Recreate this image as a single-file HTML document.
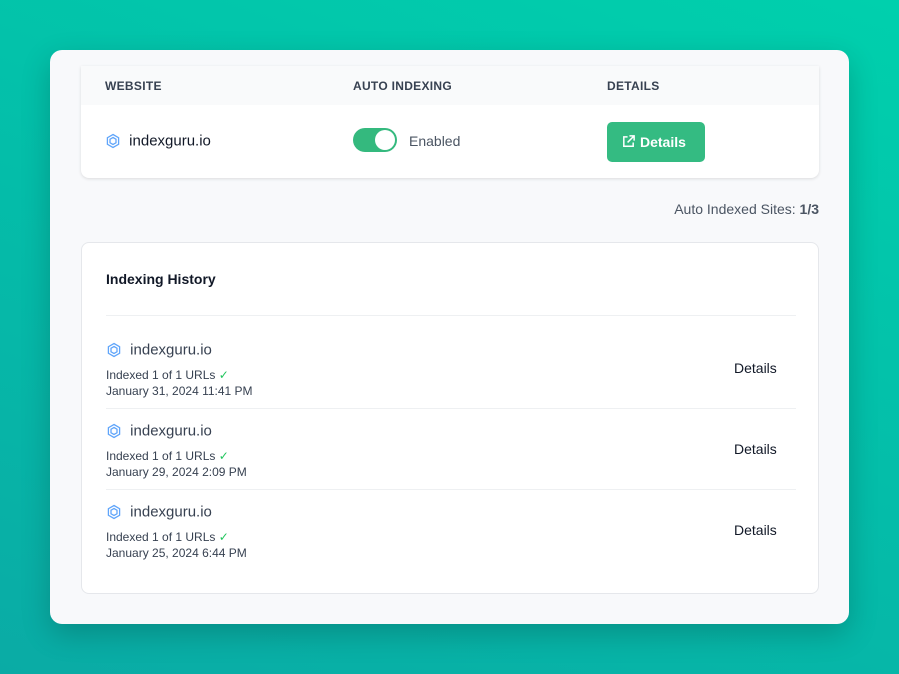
<!DOCTYPE html>
<html><head><style>
*{margin:0;padding:0;box-sizing:border-box}
body{width:899px;height:674px;overflow:hidden;background:linear-gradient(200deg,#00d0ad 0%,#04bda9 50%,#0aaba5 100%);font-family:"Liberation Sans",sans-serif;position:relative}
.panel{position:absolute;left:50px;top:50px;width:799px;height:574px;background:#f8f9fb;border-radius:12px;box-shadow:0 10px 30px rgba(0,0,0,.2)}
.tbl{position:absolute;left:31px;top:16px;width:738px;height:112px;background:#fff;border-radius:0 0 8px 8px;box-shadow:0 1px 3px rgba(0,0,0,.12)}
.thead{height:39px;background:#f9fafb;position:relative}
.th{position:absolute;top:13px;font-size:12px;font-weight:bold;color:#374151;letter-spacing:.3px}
.ico{display:inline-block;vertical-align:middle;margin-right:4px}
.site{position:absolute;font-size:15px;color:#111827}
.toggle{position:absolute;left:272px;top:62px;width:44px;height:24px;border-radius:12px;background:#34b97e}
.toggle:after{content:"";position:absolute;right:2px;top:2px;width:20px;height:20px;border-radius:50%;background:#fff}
.btn{position:absolute;left:526px;top:56px;width:98px;height:40px;background:#34bb82;border-radius:5px;color:#fff;font-weight:bold;font-size:14px;padding:12px 0 0 14px}
.hist{position:absolute;left:31px;top:192px;width:738px;height:352px;background:#fff;border:1px solid #e5e7eb;border-radius:8px}
.item{position:absolute;left:24px;width:690px;height:81px;border-bottom:1px solid #eef0f2}
.item .n{position:absolute;left:0;top:13px;font-size:15px;color:#374151}
.item .a{position:absolute;left:0;top:40px;font-size:12px;color:#374151}
.item .b{position:absolute;left:0;top:56px;font-size:12px;color:#374151}
.item .d{position:absolute;left:628px;top:32px;font-size:14px;color:#111827}
</style></head><body>
<div class="panel">
<div class="tbl">
<div class="thead">
<div class="th" style="left:24px">WEBSITE</div>
<div class="th" style="left:272px">AUTO INDEXING</div>
<div class="th" style="left:526px">DETAILS</div>
</div>
<div class="site" style="left:24px;top:66px"><svg class="ico" width="16" height="16" viewBox="0 0 16 16" fill="none" stroke="#60a5fa" stroke-width="1.3"><path d="M8 1.5l5.6 3.2v6.6L8 14.5 2.4 11.3V4.7z"/><path d="M8 4.5l3 1.7v3.6L8 11.5 5 9.8V6.2z"/></svg> <span style="vertical-align:middle">indexguru.io</span></div>
<div class="toggle"></div>
<div style="position:absolute;left:328px;top:67px;font-size:14px;color:#4b5563">Enabled</div>
<div class="btn"><svg width="15" height="15" viewBox="0 0 16 16" fill="none" stroke="#fff" stroke-width="1.6" style="vertical-align:-2px;margin-right:4px"><path d="M7 3H3v10h10V9M9 2h5v5M14 2L7 9"/></svg>Details</div>
</div>
<div style="position:absolute;right:30px;top:151px;font-size:14px;color:#4b5563">Auto Indexed Sites: <b>1/3</b></div>
<div class="hist">
<div style="position:absolute;left:24px;top:28px;font-size:14px;font-weight:bold;color:#111827">Indexing History</div>
<div style="position:absolute;left:24px;top:72px;width:690px;border-top:1px solid #eef0f2"></div>
<div class="item" style="top:85px"><div class="n"><svg class="ico" width="16" height="16" viewBox="0 0 16 16" fill="none" stroke="#60a5fa" stroke-width="1.3"><path d="M8 1.5l5.6 3.2v6.6L8 14.5 2.4 11.3V4.7z"/><path d="M8 4.5l3 1.7v3.6L8 11.5 5 9.8V6.2z"/></svg> <span style="vertical-align:middle">indexguru.io</span></div><div class="a">Indexed 1 of 1 URLs <span style="color:#22c55e">✓</span></div><div class="b">January 31, 2024 11:41 PM</div><div class="d">Details</div></div>
<div class="item" style="top:166px"><div class="n"><svg class="ico" width="16" height="16" viewBox="0 0 16 16" fill="none" stroke="#60a5fa" stroke-width="1.3"><path d="M8 1.5l5.6 3.2v6.6L8 14.5 2.4 11.3V4.7z"/><path d="M8 4.5l3 1.7v3.6L8 11.5 5 9.8V6.2z"/></svg> <span style="vertical-align:middle">indexguru.io</span></div><div class="a">Indexed 1 of 1 URLs <span style="color:#22c55e">✓</span></div><div class="b">January 29, 2024 2:09 PM</div><div class="d">Details</div></div>
<div class="item" style="top:247px;border-bottom:none"><div class="n"><svg class="ico" width="16" height="16" viewBox="0 0 16 16" fill="none" stroke="#60a5fa" stroke-width="1.3"><path d="M8 1.5l5.6 3.2v6.6L8 14.5 2.4 11.3V4.7z"/><path d="M8 4.5l3 1.7v3.6L8 11.5 5 9.8V6.2z"/></svg> <span style="vertical-align:middle">indexguru.io</span></div><div class="a">Indexed 1 of 1 URLs <span style="color:#22c55e">✓</span></div><div class="b">January 25, 2024 6:44 PM</div><div class="d">Details</div></div>
</div>
</div>
</body></html>
